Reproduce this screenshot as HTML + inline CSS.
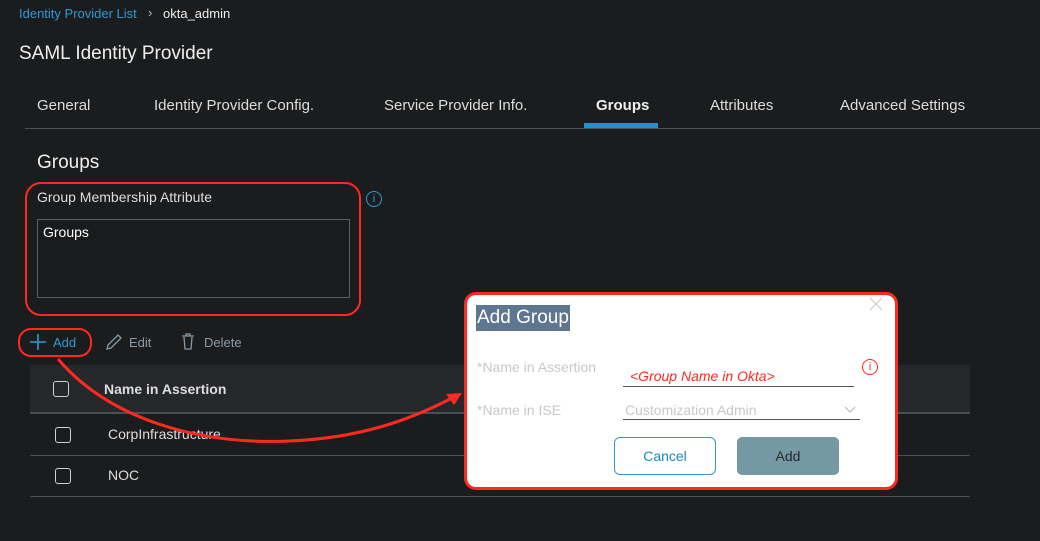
<!DOCTYPE html>
<html><head><meta charset="utf-8"><style>
body{margin:0;width:1040px;height:541px;background:#1b1c1d;font-family:"Liberation Sans",sans-serif;position:relative;overflow:hidden;color:#e6e6e6}
.a{position:absolute;white-space:nowrap}
.cb{position:absolute;width:14px;height:14px;border:1.5px solid #d0d0d0;border-radius:3px}
</style></head><body>
<div class="a" style="left:19px;top:6px;font-size:13px;color:#2e9ad6">Identity Provider List</div>
<div class="a" style="left:148px;top:5px;font-size:13px;color:#bbb">›</div>
<div class="a" style="left:163px;top:6px;font-size:13px;color:#eee">okta_admin</div>
<div class="a" style="left:19px;top:43px;font-size:19px;color:#eee">SAML Identity Provider</div>
<div class="a" style="left:37px;top:97px;font-size:15px;color:#ddd">General</div>
<div class="a" style="left:154px;top:97px;font-size:15px;color:#ddd">Identity Provider Config.</div>
<div class="a" style="left:384px;top:97px;font-size:15px;color:#ddd">Service Provider Info.</div>
<div class="a" style="left:596px;top:97px;font-size:15px;color:#eee;font-weight:bold">Groups</div>
<div class="a" style="left:710px;top:97px;font-size:15px;color:#ddd">Attributes</div>
<div class="a" style="left:840px;top:97px;font-size:15px;color:#ddd">Advanced Settings</div>
<div class="a" style="left:25px;top:128px;width:1015px;height:1px;background:#4a4f55"></div>
<div class="a" style="left:584px;top:123px;width:74px;height:5px;background:#1b94d0"></div>
<div class="a" style="left:37px;top:152px;font-size:19px;color:#eee">Groups</div>
<div class="a" style="left:25px;top:182px;width:332px;height:130px;border:2.5px solid #ff2a1f;border-radius:16px"></div>
<div class="a" style="left:37px;top:189px;font-size:14px;color:#ddd">Group Membership Attribute</div>
<div class="a" style="left:366px;top:191px;width:14px;height:14px;border:1.5px solid #2e9ad6;border-radius:50%;color:#2e9ad6;font-size:11px;text-align:center;line-height:14px">i</div>
<div class="a" style="left:37px;top:219px;width:311px;height:77px;border:1px solid #5a5f65;background:#1a1b1c"></div>
<div class="a" style="left:43px;top:224px;font-size:14px;color:#fff">Groups</div>
<div class="a" style="left:18px;top:328px;width:70px;height:25px;border:2.5px solid #ff2a1f;border-radius:13px"></div>
<svg class="a" style="left:29px;top:333px" width="18" height="18"><path d="M9 1 V17 M1 9 H17" stroke="#2e9ad6" stroke-width="1.6"/></svg>
<div class="a" style="left:53px;top:335px;font-size:13px;color:#2e9ad6">Add</div>
<svg class="a" style="left:105px;top:333px" width="18" height="18"><path d="M2 16 L3 12 L13 2 L16 5 L6 15 Z" fill="none" stroke="#8a9aa5" stroke-width="1.3"/></svg>
<div class="a" style="left:129px;top:335px;font-size:13px;color:#8a9aa5">Edit</div>
<svg class="a" style="left:181px;top:333px" width="14" height="17"><path d="M1 3 H13 M5 3 V1 H9 V3 M3 4 L4 16 H10 L11 4" fill="none" stroke="#8a9aa5" stroke-width="1.3"/></svg>
<div class="a" style="left:204px;top:335px;font-size:13px;color:#8a9aa5">Delete</div>
<div class="a" style="left:30px;top:365px;width:940px;height:47px;background:#25272a"></div>
<div class="a" style="left:30px;top:412px;width:940px;height:2px;background:#4a4f55"></div>
<div class="a" style="left:30px;top:455px;width:940px;height:1px;background:#4a4f55"></div>
<div class="a" style="left:30px;top:496px;width:940px;height:1px;background:#4a4f55"></div>
<div class="cb" style="left:53px;top:381px"></div>
<div class="a" style="left:104px;top:381px;font-size:14px;font-weight:bold;color:#ddd">Name in Assertion</div>
<div class="cb" style="left:55px;top:427px"></div>
<div class="a" style="left:108px;top:426px;font-size:14px;color:#ddd">CorpInfrastructure</div>
<div class="cb" style="left:55px;top:468px"></div>
<div class="a" style="left:108px;top:467px;font-size:14px;color:#ddd">NOC</div>
<svg class="a" style="left:0;top:0" width="1040" height="541"><path d="M58 359 C110 420 200 445 290 441 C360 438 410 420 452 398" fill="none" stroke="#ff2a1f" stroke-width="3"/><path d="M462 393 L446 394 L454 405 Z" fill="#ff2a1f"/></svg>
<div class="a" style="left:464px;top:292px;width:428px;height:192px;background:#fff;border:3px solid #ff2a1f;border-radius:12px"></div>
<svg class="a" style="left:869px;top:297px" width="14" height="14"><path d="M1 1 L13 13 M13 1 L1 13" stroke="#ccc" stroke-width="1.2"/></svg>
<div class="a" style="left:476px;top:305px;height:26px;padding:0 1px;background:#5f7690;color:#fff;font-size:19px;line-height:26px">Add Group</div>
<div class="a" style="left:477px;top:359px;font-size:14px;color:#c8c8c8">*Name in Assertion</div>
<div class="a" style="left:630px;top:368px;font-size:14px;color:#ff2a1f;font-style:italic">&lt;Group Name in Okta&gt;</div>
<div class="a" style="left:623px;top:386px;width:231px;height:1px;background:#555"></div>
<div class="a" style="left:862px;top:359px;width:14px;height:14px;border:1.5px solid #ff2a1f;border-radius:50%;color:#ff2a1f;font-size:11px;text-align:center;line-height:14px">i</div>
<div class="a" style="left:477px;top:402px;font-size:14px;color:#c8c8c8">*Name in ISE</div>
<div class="a" style="left:625px;top:402px;font-size:14px;color:#c8c8c8">Customization Admin</div>
<svg class="a" style="left:844px;top:406px" width="12" height="8"><path d="M1 1 L6 6 L11 1" fill="none" stroke="#bbb" stroke-width="1.2"/></svg>
<div class="a" style="left:623px;top:419px;width:237px;height:1px;background:#555"></div>
<div class="a" style="left:614px;top:437px;width:100px;height:36px;border:1.5px solid #2e9ad6;border-radius:6px;color:#1b88c4;font-size:14px;text-align:center;line-height:36px">Cancel</div>
<div class="a" style="left:737px;top:437px;width:102px;height:38px;background:#7499a4;border-radius:5px;color:#2a2a2a;font-size:14px;text-align:center;line-height:38px">Add</div>
</body></html>
